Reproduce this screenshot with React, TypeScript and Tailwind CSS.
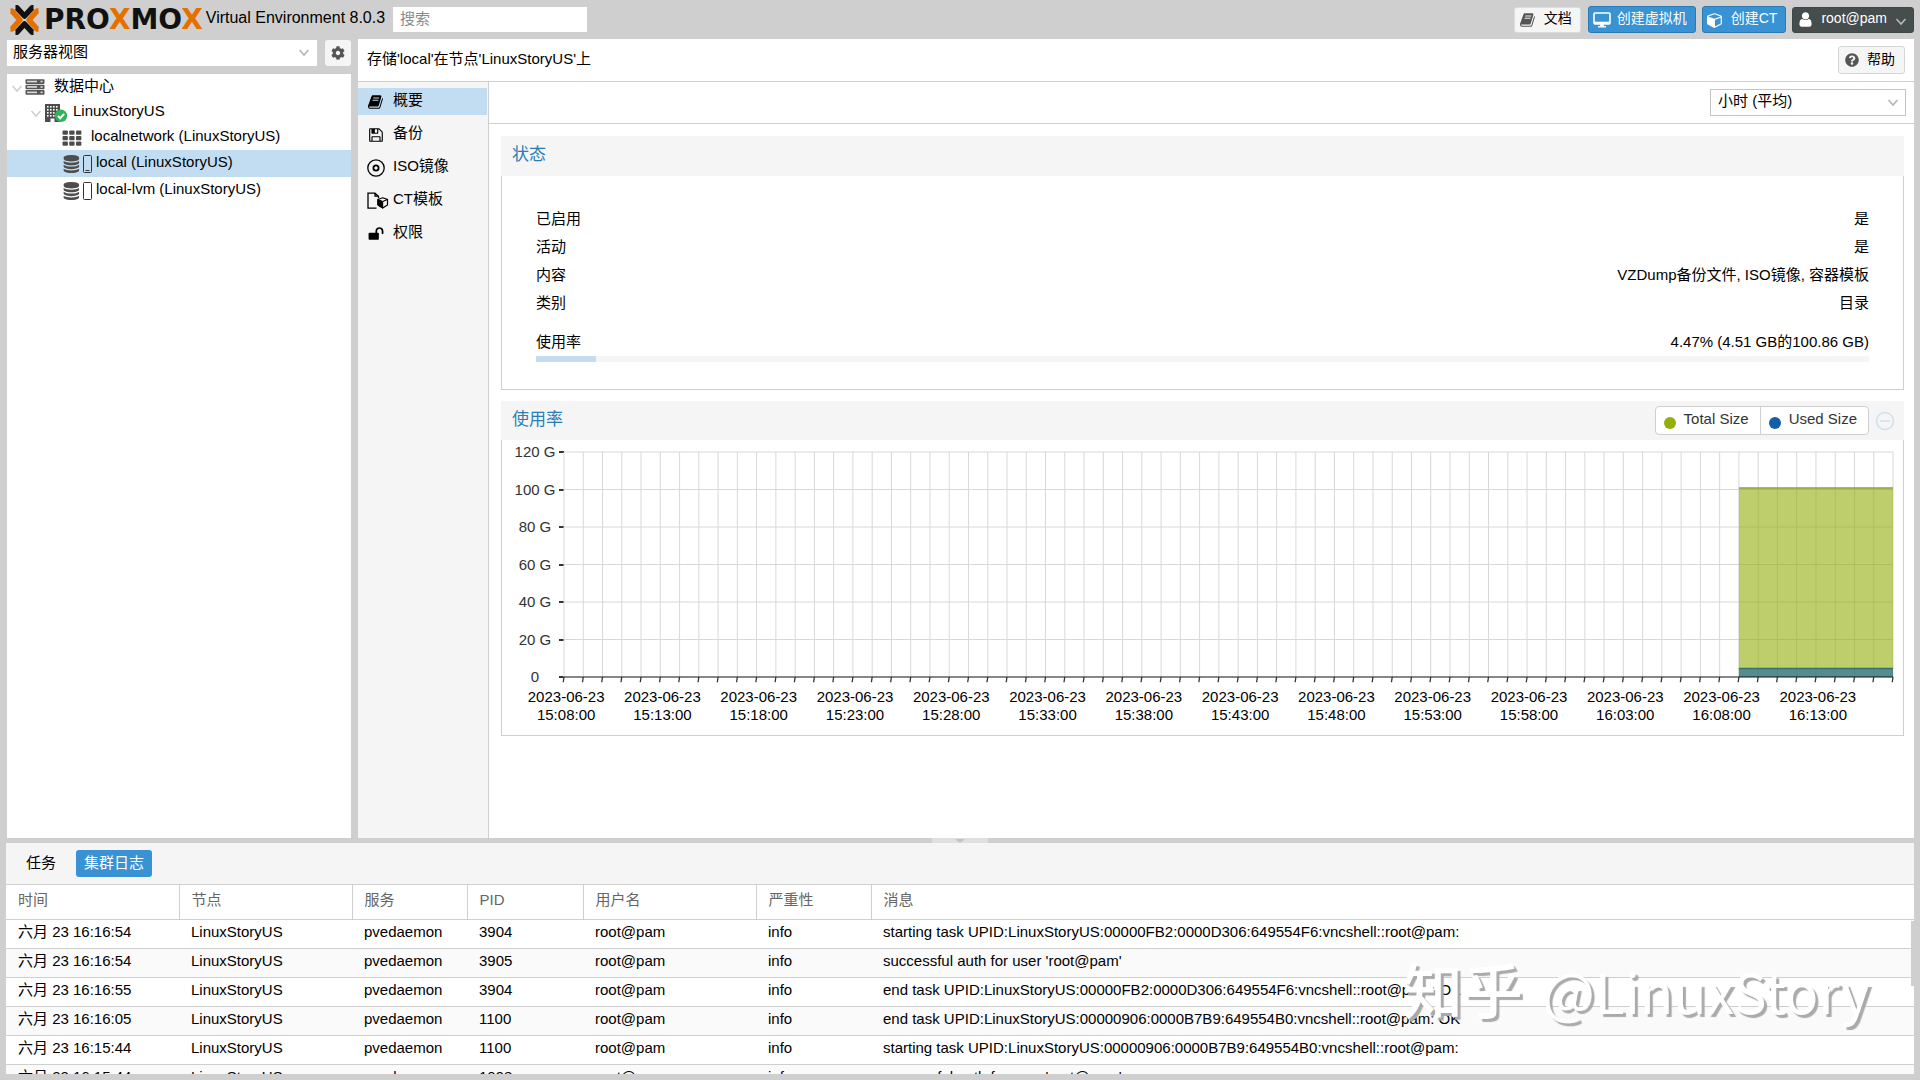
import React from "react";
import { FaCog, FaQuestionCircle } from "react-icons/fa";

/* ---------- icons ---------- */

type GlyphProps = { d: string; className?: string };

function Glyph({ d, className = "size-4" }: GlyphProps) {
  return (
    <svg viewBox="0 0 1792 1792" fill="currentColor" className={`shrink-0 ${className}`} aria-hidden="true">
      <path d={d} />
    </svg>
  );
}

const BOOK =
  "M1639 478q40 57 18 129l-275 906q-19 64-76.5 107.5t-122.5 43.5h-923q-77 0-148.5-53.5t-99.5-131.5q-24-67-2-127 0-4 3-27t4-37q1-8-3-21.5t-3-19.5q2-11 8-21t16.5-23.5 16.5-23.5q23-38 45-91.5t30-91.5q3-10 .5-30t-.5-28q3-11 17-28t17-23q21-36 42-92t25-90q1-9-2.5-32t.5-28q4-13 22-30.5t22-22.5q19-26 42.5-84.5t27.5-96.5q1-8-3-25.5t-2-26.5q2-8 9-18t18-23 17-21q8-12 16.5-30.5t15-35 16-36 19.5-32 26.5-23.5 36-11.5 47.5 5.5l-1 3q38-9 51-9h761q74 0 114 56t18 130l-274 906q-36 119-71.5 153.5t-128.5 34.5h-869q-27 0-38 15-11 16-1 43 24 70 144 70h923q29 0 56-15.5t35-41.5l300-987q7-22 5-57 38 15 59 43zm-1064 2q-4 13 2 22.5t20 9.5h608q13 0 25.5-9.5t16.5-22.5l21-64q4-13-2-22.5t-20-9.5h-608q-13 0-25.5 9.5t-16.5 22.5zm-83 256q-4 13 2 22.5t20 9.5h608q13 0 25.5-9.5t16.5-22.5l21-64q4-13-2-22.5t-20-9.5h-608q-13 0-25.5 9.5t-16.5 22.5z";
const FLOPPY =
  "M512 1536h768v-384h-768v384zm896 0h128v-896q0-14-10-38.5t-20-34.5l-281-281q-10-10-34-20t-39-10v416q0 40-28 68t-68 28h-576q-40 0-68-28t-28-68v-416h-128v1280h128v-416q0-40 28-68t68-28h832q40 0 68 28t28 68v416zm-384-928v-320q0-13-9.5-22.5t-22.5-9.5h-192q-13 0-22.5 9.5t-9.5 22.5v320q0 13 9.5 22.5t22.5 9.5h192q13 0 22.5-9.5t9.5-22.5zm640 32v928q0 40-28 68t-68 28h-1344q-40 0-68-28t-28-68v-1344q0-40 28-68t68-28h928q40 0 88 20t76 48l280 280q28 28 48 76t20 88z";
const UNLOCK =
  "M1728 576v256q0 26-19 45t-45 19h-64q-26 0-45-19t-19-45v-256q0-106-75-181t-181-75-181 75-75 181v192h96q40 0 68 28t28 68v576q0 40-28 68t-68 28h-960q-40 0-68-28t-28-68v-576q0-40 28-68t68-28h672v-192q0-185 131.5-316.5t316.5-131.5 316.5 131.5 131.5 316.5z";
const CUBE =
  "M896 1629l640-349v-636l-640 233v752zm-64-865l698-254-698-254-698 254zm832-252v768q0 35-18 65t-49 47l-704 384q-28 16-61 16t-61-16l-704-384q-31-17-49-47t-18-65v-768q0-40 23-73t61-47l704-256q22-8 44-8t44 8l704 256q38 14 61 47t23 73z";
const DATABASE =
  "M832 768q237 0 443-43t325-127v170q0 69-103 128t-280 93.5-385 34.5-385-34.5-280-93.5-103-128v-170q119 84 325 127t443 43zm0 768q237 0 443-43t325-127v170q0 69-103 128t-280 93.5-385 34.5-385-34.5-280-93.5-103-128v-170q119 84 325 127t443 43zm0-384q237 0 443-43t325-127v170q0 69-103 128t-280 93.5-385 34.5-385-34.5-280-93.5-103-128v-170q119 84 325 127t443 43zm0-1152q208 0 385 34.5t280 93.5 103 128v128q0 69-103 128t-280 93.5-385 34.5-385-34.5-280-93.5-103-128v-128q0-69 103-128t280-93.5 385-34.5z";
const USER =
  "M1536 1399q0 109-62.5 187t-150.5 78h-854q-88 0-150.5-78t-62.5-187q0-85 8.5-160.5t31.5-152 58.5-131 94-89 134.5-34.5q131 128 313 128t313-128q76 0 134.5 34.5t94 89 58.5 131 31.5 152 8.5 160.5zm-256-887q0 159-112.5 271.5t-271.5 112.5-271.5-112.5-112.5-271.5 112.5-271.5 271.5-112.5 271.5 112.5 112.5 271.5z";

function Chevron({ className = "" }: { className?: string }) {
  return (
    <svg viewBox="0 0 12 8" fill="none" stroke="currentColor" strokeWidth="1.6" className={`h-2 w-3 shrink-0 ${className}`} aria-hidden="true">
      <path d="M1.500 1l4.500 5L10.500 1" />
    </svg>
  );
}

function DesktopIcon() {
  return (
    <svg viewBox="0 0 18 16" fill="none" stroke="currentColor" strokeWidth="1.6" className="h-4 w-[18px] shrink-0" aria-hidden="true">
      <rect x="1" y="1" width="16" height="11" rx="1" />
      <path d="M1 10.8h16" strokeWidth="2.2" />
      <path d="M7.5 12h3l.7 2.6H6.800z" fill="currentColor" stroke="none" />
      <path d="M5 14.800h8" strokeWidth="1.4" />
    </svg>
  );
}

function ServerIcon() {
  return (
    <svg viewBox="0 0 20 16" className="h-4 w-5 shrink-0" aria-hidden="true">
      {[0, 5.4, 10.8].map((y) => (
        <g key={y}>
          <rect x="0.500" y={y + 0.3} width="19" height="4.600" rx="0.800" fill="#555" />
          <rect x="2" y={y + 1.700} width="10" height="1.700" fill="#d8d8d8" />
          <rect x="15.500" y={y + 1.700} width="2.200" height="1.700" fill="#d8d8d8" />
        </g>
      ))}
    </svg>
  );
}

function NodeIcon() {
  return (
    <svg viewBox="0 0 24 20" className="h-5 w-6 shrink-0" aria-hidden="true">
      <path d="M1 1h15v18H10.500v-3.500H6.500V19H1z" fill="#4d4d4d" />
      {[3, 6, 9, 12].map((y) =>
        [3, 6, 9, 12].map((x) => <rect key={`${x}-${y}`} x={x} y={y} width="1.600" height="1.600" fill="#fff" />),
      )}
      <circle cx="17" cy="12.800" r="6.200" fill="#2fb457" />
      <path d="M14 13l2.200 2.200 4-4.400" stroke="#fff" strokeWidth="2" fill="none" />
    </svg>
  );
}

function GridIcon() {
  return (
    <svg viewBox="0 0 20 16" fill="#4d4d4d" className="h-4 w-5 shrink-0" aria-hidden="true">
      {[0.5, 6, 11.500].map((y) =>
        [0.5, 7.200, 14].map((x) => <rect key={`${x}-${y}`} x={x} y={y} width="5.400" height="4.300" rx="1" />),
      )}
    </svg>
  );
}

function StorageIcon({ level }: { level: boolean }) {
  return (
    <span className="flex items-center gap-[2px] text-[#4d4d4d]">
      <Glyph d={DATABASE} className="size-[18px]" />
      <svg viewBox="0 0 9 18" className="h-[18px] w-[9px] shrink-0" fill="none" stroke="#333" aria-hidden="true">
        <rect x="0.500" y="0.500" width="8" height="17" rx="1" />
        {level && <path d="M2.500 15.500h4" />}
      </svg>
    </span>
  );
}

function DiscIcon() {
  return (
    <svg viewBox="0 0 18 18" fill="none" stroke="currentColor" className="size-[18px] shrink-0" aria-hidden="true">
      <circle cx="9" cy="9" r="8.200" strokeWidth="1.300" />
      <circle cx="9" cy="9" r="2.600" strokeWidth="1.800" />
    </svg>
  );
}

function TemplateIcon() {
  return (
    <svg viewBox="0 0 22 18" fill="none" stroke="currentColor" className="-mr-1 h-[18px] w-[22px] shrink-0" aria-hidden="true">
      <path d="M9.500 16.200H1V1.200h7l3.500 3V6M8 1.200v3h3.500" strokeWidth="1.300" />
      <path d="M15.700 5.800l4.800 1.700v5.500l-4.800 3-4.800-3V7.500z" fill="#f5f5f5" strokeWidth="1.200" />
      <path d="M10.900 7.500l4.800 2v6.500l-4.800-3z" fill="currentColor" />
      <path d="M15.700 9.500l4.800-2" strokeWidth="1.200" />
    </svg>
  );
}

function Logo() {
  return (
    <div className="flex items-center gap-[3px]" aria-label="Proxmox">
      <svg viewBox="0 0 33 30" fill="none" strokeWidth="5.500" strokeLinejoin="round" className="h-[30px] w-[33px]" aria-hidden="true">
        <path d="M2.500 6h1.500l8 9-8 9H2.500" stroke="#e57000" />
        <path d="M30.500 6H29l-8 9 8 9h1.500" stroke="#e57000" />
        <path d="M7.500 2.800h1.500l7.500 8.200L24 2.800h1.500" stroke="#111" />
        <path d="M7.500 27.200h1.500l7.500-8.200 7.500 8.200h1.500" stroke="#111" />
      </svg>
      <span className="font-['DejaVu_Sans',sans-serif] text-[28px] leading-[30px] font-bold text-[#111]">
        PRO<span className="text-[#e57000]">X</span>MO<span className="text-[#e57000]">X</span>
      </span>
    </div>
  );
}

/* ---------- data ---------- */

const tree = [
  { label: "数据中心", row: "h-[26px] pl-1", icon: <ServerIcon />, open: true, gap: "gap-[9px]", selected: false },
  { label: "LinuxStoryUS", row: "h-[25px] pl-[23px]", icon: <NodeIcon />, open: true, gap: "gap-[5px]", selected: false },
  { label: "localnetwork (LinuxStoryUS)", row: "h-[25px] pl-[55px]", icon: <GridIcon />, open: false, gap: "gap-[9px]", selected: false },
  { label: "local (LinuxStoryUS)", row: "h-[27px] pl-14", icon: <StorageIcon level />, open: false, gap: "gap-1", selected: true },
  { label: "local-lvm (LinuxStoryUS)", row: "h-[27px] pl-14", icon: <StorageIcon level={false} />, open: false, gap: "gap-1", selected: false },
];

const menu = [
  { label: "概要", icon: <Glyph d={BOOK} /> },
  { label: "备份", icon: <Glyph d={FLOPPY} /> },
  { label: "ISO镜像", icon: <DiscIcon /> },
  { label: "CT模板", icon: <TemplateIcon /> },
  { label: "权限", icon: <Glyph d={UNLOCK} /> },
];

const status = [
  ["已启用", "是"],
  ["活动", "是"],
  ["内容", "VZDump备份文件, ISO镜像, 容器模板"],
  ["类别", "目录"],
];

const MINUTES = 69;
const MAX_GB = 120;
const DATA_START = 61;
const totalGB = 100.86;
const usedGB = 4.51;
const yTicks = ["120 G", "100 G", "80 G", "60 G", "40 G", "20 G", "0"];
const xTicks = [
  "15:08:00", "15:13:00", "15:18:00", "15:23:00", "15:28:00", "15:33:00", "15:38:00",
  "15:43:00", "15:48:00", "15:53:00", "15:58:00", "16:03:00", "16:08:00", "16:13:00",
];

const logHeads = ["时间", "节点", "服务", "PID", "用户名", "严重性", "消息"];
const log = [
  ["六月 23 16:16:54", "3904", "starting task UPID:LinuxStoryUS:00000FB2:0000D306:649554F6:vncshell::root@pam:"],
  ["六月 23 16:16:54", "3905", "successful auth for user 'root@pam'"],
  ["六月 23 16:16:55", "3904", "end task UPID:LinuxStoryUS:00000FB2:0000D306:649554F6:vncshell::root@pam: OK"],
  ["六月 23 16:16:05", "1100", "end task UPID:LinuxStoryUS:00000906:0000B7B9:649554B0:vncshell::root@pam: OK"],
  ["六月 23 16:15:44", "1100", "starting task UPID:LinuxStoryUS:00000906:0000B7B9:649554B0:vncshell::root@pam:"],
  ["六月 23 16:15:44", "1098", "successful auth for user 'root@pam'"],
];

/* ---------- sections ---------- */

function Header() {
  return (
    <header className="flex h-[39px] shrink-0 items-center pr-[6px] pl-2">
      <Logo />
      <h1 className="ml-[3px] pb-1 text-[16px] whitespace-nowrap">Virtual Environment 8.0.3</h1>
      <input
        type="search"
        aria-label="搜索"
        placeholder="搜索"
        className="ml-2 h-[25px] w-[194px] bg-white px-[7px] pb-[3px] outline-none placeholder:text-[#8a8a8a]"
      />
      <div className="ml-auto flex items-center gap-[6px] text-[14px] leading-5">
        <button className="mr-px flex h-[26px] items-center gap-2 rounded-[3px] border border-[#dcdcdc] bg-[#f5f5f5] pr-2 pl-[5px]">
          <Glyph d={BOOK} className="size-4 text-[#555]" />
          <span className="pb-[3px]">文档</span>
        </button>
        <button className="flex h-[27px] items-center gap-[6px] rounded-[3px] border border-[#2a78b4] bg-[#3892d4] pr-2 pl-1 text-white">
          <DesktopIcon />
          <span className="pb-[3px]">创建虚拟机</span>
        </button>
        <button className="flex h-[27px] items-center gap-2 rounded-[3px] border border-[#2a78b4] bg-[#3892d4] pr-2 pl-1 text-white">
          <Glyph d={CUBE} className="size-4" />
          <span className="pb-[3px]">创建CT</span>
        </button>
        <button className="flex h-[26px] items-center gap-[7px] rounded-[3px] border border-[#3c4848] bg-[#464d4d] pr-[6px] pl-1 text-white">
          <Glyph d={USER} className="size-[17px]" />
          <span className="pb-[3px]">root@pam</span>
          <Chevron className="mt-1 ml-px text-[#b8b8b8]" />
        </button>
      </div>
    </header>
  );
}

function ResourceTree() {
  return (
    <aside className="flex w-[344px] shrink-0 flex-col pt-px">
      <div className="flex h-[26px] shrink-0 gap-2">
        <div className="relative flex-1">
          <select aria-label="视图" className="h-full w-full appearance-none bg-white px-[6px] pb-[2px] outline-none">
            <option>服务器视图</option>
          </select>
          <Chevron className="pointer-events-none absolute top-[9px] right-[7px] text-[#b5b5b5]" />
        </div>
        <button aria-label="设置" className="flex w-[26px] items-center justify-center rounded-[3px] bg-[#f5f5f5] text-[#555]">
          <FaCog className="size-[14px]" />
        </button>
      </div>
      <ul className="mt-2 flex-1 bg-white">
        {tree.map((n) => (
          <li key={n.label}>
            <button className={`flex w-full items-center text-left ${n.row} ${n.selected ? "bg-[#c2ddf2]" : ""}`}>
              {n.open && <Chevron className="mt-[3px] mr-[2px] text-[#cfcfcf]" />}
              <span className={`flex items-center ${n.gap}`}>
                {n.icon}
                <span className="pb-[3px]">{n.label}</span>
              </span>
            </button>
          </li>
        ))}
      </ul>
    </aside>
  );
}

function SideMenu() {
  return (
    <nav className="w-[131px] shrink-0 border-r border-[#cfcfcf] bg-[#f5f5f5] pt-[6px]">
      <ul className="flex flex-col gap-[6px]">
        {menu.map((m, i) => (
          <li key={m.label}>
            <button className={`flex h-[27px] w-[129px] items-center gap-2 pl-[9px] text-left ${i === 0 ? "bg-[#c2ddf2]" : ""}`}>
              <span className="flex w-[18px] shrink-0 items-center justify-center">{m.icon}</span>
              <span className="pb-[3px]">{m.label}</span>
            </button>
          </li>
        ))}
      </ul>
    </nav>
  );
}

function StatusPanel() {
  return (
    <section>
      <h2 className="h-10 bg-[#f5f5f5] px-[11px] pt-[9px] text-[17px] leading-5 text-[#2b7db8]">状态</h2>
      <div className="border border-t-0 border-[#cfcfcf] px-[34px] pt-[29px] pb-[27px]">
        <dl>
          {status.map(([k, v]) => (
            <div key={k} className="flex h-[28px] items-center justify-between">
              <dt>{k}</dt>
              <dd>{v}</dd>
            </div>
          ))}
          <div className="mt-3 mb-px flex h-[26px] items-center justify-between">
            <dt>使用率</dt>
            <dd>4.47% (4.51 GB的100.86 GB)</dd>
          </div>
        </dl>
        <div role="progressbar" aria-label="使用率" aria-valuenow={4.47} className="h-[6px] bg-[#f5f5f5]">
          <div className="h-full bg-[#c2ddf2]" style={{ width: "4.47%" }} />
        </div>
      </div>
    </section>
  );
}

function Plot() {
  const ticks = Array.from({ length: MINUTES + 1 }, (_, i) => i);
  const totalY = MAX_GB - totalGB;
  const usedY = MAX_GB - usedGB;
  return (
    <svg viewBox={`0 0 ${MINUTES} ${MAX_GB}`} preserveAspectRatio="none" className="block h-[225px] w-full overflow-visible" role="img" aria-label="使用率">
      <g stroke="#d8d8d8" strokeWidth="1">
        {ticks.map((x) => (
          <line key={x} x1={x} x2={x} y1={0} y2={MAX_GB} vectorEffect="non-scaling-stroke" />
        ))}
        {[0, 20, 40, 60, 80, 100].map((y) => (
          <line key={y} x1={0} x2={MINUTES} y1={y} y2={y} vectorEffect="non-scaling-stroke" />
        ))}
      </g>
      <rect x={DATA_START} y={totalY} width={MINUTES - DATA_START} height={totalGB} fill="#94ae0a" fillOpacity="0.6" />
      <path d={`M${DATA_START} ${totalY}H${MINUTES}`} stroke="#8fa04a" strokeWidth="1.500" vectorEffect="non-scaling-stroke" />
      <rect x={DATA_START} y={usedY} width={MINUTES - DATA_START} height={usedGB} fill="#115fa6" fillOpacity="0.6" />
      <path d={`M${DATA_START} ${usedY}H${MINUTES}`} stroke="#3b6f6a" strokeWidth="1.500" vectorEffect="non-scaling-stroke" />
      <path d={`M0 ${MAX_GB}H${MINUTES}`} stroke="#111" strokeWidth="1.200" vectorEffect="non-scaling-stroke" />
      <g stroke="#333" strokeWidth="1.300">
        {ticks.map((x) => (
          <line key={x} x1={x} x2={x - 0.040} y1={MAX_GB} y2={MAX_GB + 2.800} vectorEffect="non-scaling-stroke" />
        ))}
      </g>
    </svg>
  );
}

function UsagePanel() {
  return (
    <section>
      <header className="flex h-[39px] items-center justify-between bg-[#f5f5f5] pr-[9px] pl-[11px]">
        <h2 className="pb-[2px] text-[17px] leading-5 text-[#2b7db8]">使用率</h2>
        <div className="flex items-center gap-[6px]">
          <div className="flex h-[29px] divide-x divide-[#cfcfcf] rounded-[4px] border border-[#cfcfcf] bg-white text-[#333]">
            <button className="flex items-center gap-2 pr-[11px] pl-2">
              <i className="mt-1 size-3 rounded-full bg-[#94ae0a]" />
              <span className="pb-1">Total Size</span>
            </button>
            <button className="flex items-center gap-2 pr-[11px] pl-2">
              <i className="mt-1 size-3 rounded-full bg-[#115fa6]" />
              <span className="pb-1">Used Size</span>
            </button>
          </div>
          <button aria-label="撤销缩放" className="text-[#cfe0ea]">
            <svg viewBox="0 0 20 20" fill="none" stroke="currentColor" strokeWidth="1.500" className="size-5">
              <circle cx="10" cy="10" r="8.500" />
              <path d="M5 10h10" />
            </svg>
          </button>
        </div>
      </header>
      <div className="flex border border-t-0 border-[#cfcfcf] pr-[10px] pb-[11px]">
        <ol className="flex h-[249px] w-[62px] shrink-0 flex-col justify-between pl-[10px] text-[#333]">
          {yTicks.map((t) => (
            <li key={t} className="flex h-6 items-center whitespace-nowrap">
              <span className="flex-1 text-center">{t}</span>
              <i className="ml-px h-[2px] w-[5px] bg-[#333]" />
            </li>
          ))}
        </ol>
        <div className="min-w-0 flex-1 pt-3">
          <Plot />
          <ol className="mt-[11px] mr-[27px] ml-[-46px] grid grid-cols-[repeat(14,minmax(0,1fr))] text-center leading-[18px]">
            {xTicks.map((t) => (
              <li key={t} className="whitespace-nowrap">
                2023-06-23
                <br />
                {t}
              </li>
            ))}
          </ol>
        </div>
      </div>
    </section>
  );
}

function ContentPanel() {
  return (
    <main className="flex min-w-0 flex-1 flex-col bg-white">
      <div className="flex h-[43px] shrink-0 items-center justify-between border-b border-[#cfcfcf] pr-[9px] pl-[9px]">
        <h2 className="pb-[3px]">存储'local'在节点'LinuxStoryUS'上</h2>
        <button className="flex h-7 items-center gap-2 rounded-[3px] border border-[#d5d5d5] bg-[#f5f5f5] pr-[9px] pl-[6px] text-[14px] leading-5">
          <FaQuestionCircle className="size-[14px] text-[#555]" />
          <span className="pb-[3px]">帮助</span>
        </button>
      </div>
      <div className="flex min-h-0 flex-1">
        <SideMenu />
        <div className="min-w-0 flex-1">
          <div className="flex h-[42px] items-center justify-end border-b border-[#cfcfcf] pr-2">
            <div className="relative h-[27px] w-[196px]">
              <select aria-label="时间范围" className="h-full w-full appearance-none border border-[#c4c4c4] bg-white px-[7px] pb-[3px] outline-none">
                <option>小时 (平均)</option>
              </select>
              <Chevron className="pointer-events-none absolute top-[10px] right-[7px] text-[#b5b5b5]" />
            </div>
          </div>
          <div className="flex flex-col gap-[11px] pt-3 pr-[10px] pl-3">
            <StatusPanel />
            <UsagePanel />
          </div>
        </div>
      </div>
    </main>
  );
}

function LogPanel() {
  return (
    <section className="relative mr-[6px] mb-[6px] ml-[6px] flex h-[231px] shrink-0 flex-col overflow-hidden bg-white">
      <div className="flex h-[42px] shrink-0 items-center gap-3 border-b border-[#cfcfcf] bg-[#f5f5f5] pl-3">
        <button className="h-[27px] px-2 pb-[2px]">任务</button>
        <button className="h-[27px] rounded-[3px] bg-[#3892d4] px-2 pb-[2px] text-white">集群日志</button>
      </div>
      <table className="w-full table-fixed border-collapse text-left">
        <colgroup>
          <col className="w-[173px]" />
          <col className="w-[173px]" />
          <col className="w-[115px]" />
          <col className="w-[116px]" />
          <col className="w-[173px]" />
          <col className="w-[115px]" />
          <col />
        </colgroup>
        <thead>
          <tr className="h-[34px] border-b border-[#cfcfcf] text-[#666]">
            {logHeads.map((h) => (
              <th key={h} className="border-r border-[#cfcfcf] p-0 pb-1 pl-3 font-normal last:border-r-0">
                {h}
              </th>
            ))}
          </tr>
        </thead>
        <tbody>
          {log.map(([time, pid, msg], i) => (
            <tr key={i} className="h-[29px] border-b border-[#cfcfcf] whitespace-nowrap even:bg-[#fafafa] [&>td]:p-0 [&>td]:pb-[3px] [&>td]:pl-3">
              <td>{time}</td>
              <td>LinuxStoryUS</td>
              <td>pvedaemon</td>
              <td>{pid}</td>
              <td>root@pam</td>
              <td>info</td>
              <td>{msg}</td>
            </tr>
          ))}
        </tbody>
      </table>
      <i className="absolute top-[78px] right-0 h-[65px] w-[3px] bg-[#cfcfcf]" />
    </section>
  );
}

export default function App() {
  return (
    <div className="relative flex h-screen flex-col overflow-hidden bg-[#cfcfcf] font-['Liberation_Sans','Noto_Sans_CJK_SC',sans-serif] text-[15px] leading-5 text-black">
      <Header />
      <div className="flex min-h-0 flex-1 gap-[7px] pr-[6px] pl-[7px]">
        <ResourceTree />
        <ContentPanel />
      </div>
      <button aria-label="折叠" className="mx-auto flex h-[5px] w-14 shrink-0 items-center justify-center bg-[#e0e0e0]">
        <svg viewBox="0 0 10 4" className="h-1 w-[10px]" aria-hidden="true">
          <path d="M0 0h10L5 4z" fill="#c4c4c4" />
        </svg>
      </button>
      <LogPanel />
      <div className="pointer-events-none absolute right-[50px] bottom-[54px] flex items-baseline gap-5 font-['Noto_Sans_CJK_SC',sans-serif] text-[55px] leading-[72px] whitespace-nowrap text-white [text-shadow:3px_3px_1px_#aaa]">
        <span className="text-[60px] font-medium">知乎</span>
        <span>@LinuxStory</span>
      </div>
    </div>
  );
}
